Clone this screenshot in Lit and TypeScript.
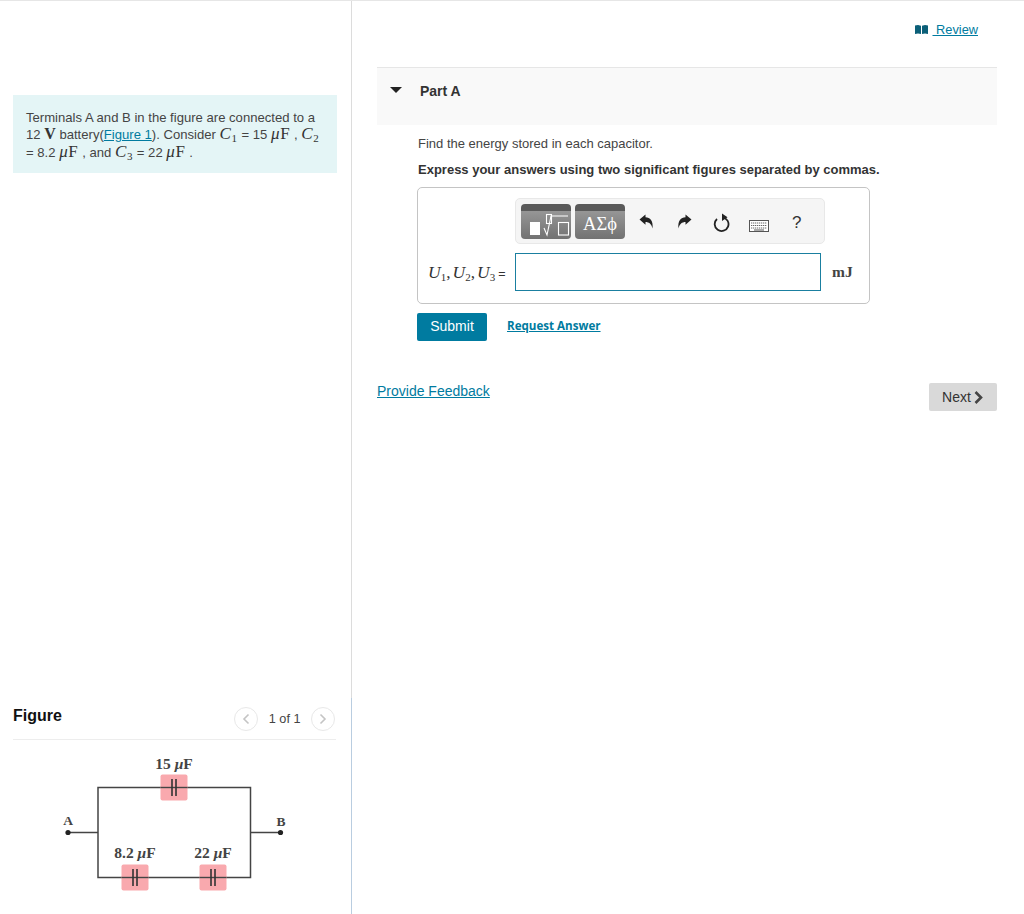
import { LitElement, html, css, svg } from "lit";
import { customElement } from "lit/decorators.js";

@customElement("app-root")
export class AppRoot extends LitElement {
  static styles = css`
    :host { display: block; width: 1024px; height: 914px; font-family: "Liberation Sans", Arial, sans-serif; color: #333; overflow: hidden; background: #fff; }
    .page { display: flex; height: 914px; box-sizing: border-box; border-top: 1px solid #e6e6e6; }
    .left { width: 352px; flex: none; box-sizing: border-box; border-right: 1px solid #dcdcdc; padding: 94px 14px 0 13px; position: relative; display: flex; flex-direction: column; }
    .left::after { content: ""; position: absolute; right: -1px; top: 697px; bottom: 0; width: 1px; background: #b9cde0; }
    .intro { width: 324px; height: 78px; box-sizing: border-box; background: #e4f5f6; padding: 15px 0 0 13px; font-size: 13.100px; color: #444; white-space: nowrap; }
    .l { height: 16px; line-height: 16px; }
    .l.last { margin-top: 2px; }
    .m { font-family: "Liberation Serif", serif; font-size: 17px; color: #333; letter-spacing: 0.700px; }
    .m i { font-style: italic; }
    .mb { font-family: "Liberation Serif", serif; font-weight: 700; font-size: 16px; color: #333; }
    .m sub { font-size: 11px; line-height: 0; vertical-align: -3px; }
    a { color: #007ba0; text-decoration: underline; }
    .fighead { margin-top: 525px; display: flex; align-items: center; height: 42px; border-bottom: 1px solid #ededed; width: 323px; box-sizing: border-box; padding-bottom: 2px; }
    .fighead h2 { margin: 0 0 3px; font-size: 16px; font-weight: 700; color: #111; flex: 1; }
    .pager { display: flex; align-items: center; gap: 10.500px; font-size: 12.700px; color: #444; margin: 3px 1px 0 0; }
    .round { width: 24px; height: 24px; box-sizing: border-box; border: 1px solid #e8e8e8; border-radius: 50%; display: flex; align-items: center; justify-content: center; }
    .figure { display: block; }
    .figure text { font-family: "Liberation Serif", serif; font-weight: 700; fill: #444; }
    .right { flex: 1; box-sizing: border-box; padding: 0 27px 0 25px; display: flex; flex-direction: column; }
    .review { display: flex; justify-content: flex-end; align-items: flex-start; height: 66px; padding: 21px 19px 0 0; box-sizing: border-box; font-size: 12.800px; }
    .review svg { margin: 3px 4px 0 0; }
    .parthead { height: 58px; background: #f9f9f9; border-top: 1px solid #e6e6e6; box-sizing: border-box; padding: 15px 0 0 13px; display: flex; gap: 18px; font-size: 14px; font-weight: 700; color: #333; line-height: 17px; align-items: flex-start; }
    .tri { margin-top: 4px; }
    .body { padding-left: 40px; }
    .find { margin: 11px 0 0 1px; font-size: 13px; line-height: 16px; color: #444; }
    .express { margin: 10px 0 0 1px; font-size: 13px; line-height: 16px; font-weight: 700; color: #333; }
    .answer { margin-top: 9px; width: 453px; height: 117px; box-sizing: border-box; border: 1px solid #c4c4c4; border-radius: 5px; padding: 10px 0 0 10px; }
    .toolbar { margin-left: 87px; width: 310px; height: 46px; box-sizing: border-box; background: #f5f5f5; border: 1px solid #e8e8e8; border-radius: 5px; display: flex; align-items: center; padding-left: 5px; }
    .tb { width: 50px; height: 35px; box-sizing: border-box; border-radius: 4px; border-top: 7px solid #5a5a5a; background: linear-gradient(#969696, #727272); display: flex; align-items: center; justify-content: center; color: #fff; margin-right: 4px; }
    .tb svg { display: block; }
    .tb.two { font-family: "Liberation Serif", serif; font-size: 18.500px; }
    .tools { display: flex; margin: 1px 0 0 -1px; }
    .ico { width: 37.500px; height: 22px; box-sizing: border-box; display: flex; justify-content: center; align-items: center; }
    .ico.low { padding-top: 9px; }
    .ico.re { padding-top: 2px; }
    .ico.q { font-size: 17px; color: #333; padding-top: 3px; }
    .inputrow { display: flex; align-items: center; margin-top: 9px; }
    .label { width: 87px; font-family: "Liberation Serif", serif; font-size: 17.500px; color: #333; white-space: nowrap; }
    .label i { font-style: italic; }
    .label sub { font-size: 11px; line-height: 0; vertical-align: -3px; }
    .label .c { margin-right: 2px; }
    .label .eq { font-family: "Liberation Sans", sans-serif; font-size: 12.500px; margin-left: 3px; }
    .box { width: 306px; height: 38px; box-sizing: border-box; border: 1px solid #1a7fa0; background: #fff; }
    .unit { margin-left: 11px; font-family: "Liberation Serif", serif; font-weight: 700; font-size: 15.500px; color: #444; }
    .actions { display: flex; align-items: center; margin-top: 9px; gap: 20px; }
    .submit { width: 70px; height: 28px; box-sizing: border-box; padding-bottom: 2px; background: #007ba0; color: #fff; border-radius: 2px; display: flex; align-items: center; justify-content: center; font-size: 14px; }
    .req { font-family: "Open Sans", "Liberation Sans", sans-serif; font-weight: 700; font-size: 11.600px; margin-top: -3px; }
    .bottom { display: flex; justify-content: space-between; margin-top: 28px; align-items: flex-start; }
    .feedback { font-size: 14px; margin-top: 14px; }
    .next { width: 68px; height: 28px; background: #d9d9d9; border-radius: 2px; display: flex; align-items: center; justify-content: center; gap: 3px; font-size: 14px; color: #333; margin-top: 14px; }
  `;

  private cap(x: number, y: number) {
    return svg`<rect x=${x - 13.5} y=${y - 13} width="27" height="26" rx="2" fill="#f9a9ae"/>
      <path d="M${x - 13.5} ${y}H${x + 13.5}" stroke="#444" stroke-width="1.400"/>
      <path d="M${x - 2} ${y - 8.5}V${y + 8.5}M${x + 2} ${y - 8.5}V${y + 8.5}" stroke="#333" stroke-width="1.600"/>`;
  }

  render() {
    return html`<div class="page">
      <div class="left">
        <div class="intro">
          <div class="l">Terminals A and B in the figure are connected to a</div>
          <div class="l">12 <span class="mb">V</span> battery(<a href="#">Figure 1</a>). Consider <span class="m"><i>C</i><sub>1</sub></span> = 15 <span class="m"><i>μ</i>F</span> , <span class="m"><i>C</i><sub>2</sub></span></div>
          <div class="l last">= 8.2 <span class="m"><i>μ</i>F</span> , and <span class="m"><i>C</i><sub>3</sub></span> = 22 <span class="m"><i>μ</i>F</span> .</div>
        </div>
        <div class="fighead">
          <h2>Figure</h2>
          <div class="pager">
            <span class="round"><svg width="8" height="12" viewBox="0 0 8 12"><path d="M6.500 1.500 2 6l4.500 4.500" fill="none" stroke="#c4c4c4" stroke-width="1.600"/></svg></span>
            <span>1 of 1</span>
            <span class="round"><svg width="8" height="12" viewBox="0 0 8 12"><path d="M1.500 1.500 6 6l-4.500 4.500" fill="none" stroke="#c4c4c4" stroke-width="1.600"/></svg></span>
          </div>
        </div>
        <svg class="figure" width="323" height="170" viewBox="13 740 323 170">
          <path d="M98 787.500H250.500V877.500H98Z" fill="none" stroke="#444" stroke-width="1.500"/>
          <path d="M68 832.500H98M250.500 832.500H280" stroke="#444" stroke-width="1.300"/>
          <circle cx="68" cy="832.500" r="2.600" fill="#222"/>
          <circle cx="280.500" cy="832.500" r="2.600" fill="#222"/>
          ${this.cap(174, 787.5)}${this.cap(135, 877.5)}${this.cap(213, 877.5)}
          <text x="68" y="825" font-size="13.500" text-anchor="middle">A</text>
          <text x="281" y="826" font-size="13.500" text-anchor="middle">B</text>
          <text x="174" y="769" font-size="15.500" text-anchor="middle">15 <tspan font-style="italic">μ</tspan>F</text>
          <text x="135" y="858" font-size="15.500" text-anchor="middle">8.2 <tspan font-style="italic">μ</tspan>F</text>
          <text x="213" y="858" font-size="15.500" text-anchor="middle">22 <tspan font-style="italic">μ</tspan>F</text>
        </svg>
      </div>
      <div class="right">
        <div class="review"><svg width="13" height="9" viewBox="0 0 13 9"><path d="M0 0.500 3 0 6 0.800V9L3 8.400 0 9zM7 0.800 10 0 13 0.500V9L10 8.400 7 9z" fill="#0b5f78"/></svg><a href="#">&nbsp;Review</a></div>
        <div class="parthead"><svg class="tri" width="12" height="6" viewBox="0 0 12 6"><path d="M0 0h12L6 6z" fill="#222"/></svg><span>Part A</span></div>
        <div class="body">
          <p class="find">Find the energy stored in each capacitor.</p>
          <p class="express">Express your answers using two significant figures separated by commas.</p>
          <div class="answer">
            <div class="toolbar">
              <div class="tb"><svg width="50" height="28" viewBox="0 0 50 28"><rect x="9" y="11" width="10" height="13" fill="#fff"/><path d="M23 17l3 7 4-19h17" fill="none" stroke="#fff" stroke-width="1.100"/><rect x="25.500" y="3.500" width="5" height="9" fill="none" stroke="#fff" stroke-width="1.100"/><rect x="37.500" y="11.500" width="10" height="12.500" fill="none" stroke="#fff" stroke-width="1.100"/></svg></div>
              <div class="tb two">ΑΣϕ</div>
              <div class="tools">
                <span class="ico"><svg width="15" height="15" viewBox="0 0 15 15"><path d="M0.500 5.500 6.500 0.500V3.300C11 3.300 14.500 6.800 13.500 14.500 12.500 10 10 8 6.500 8V10.800Z" fill="#222"/></svg></span>
                <span class="ico"><svg width="15" height="15" viewBox="0 0 15 15"><path d="M14.500 5.500 8.500 0.500V3.300C4 3.300 0.500 6.800 1.500 14.500 2.500 10 5 8 8.500 8V10.800Z" fill="#222"/></svg></span>
                <span class="ico re"><svg width="18" height="19" viewBox="0 0 18 19"><path d="M9.500 4.300A6.900 6.900 0 1 1 4 6" fill="none" stroke="#222" stroke-width="1.800"/><path d="M9 0.500 14.500 4.200 9 8z" fill="#222"/></svg></span>
                <span class="ico low"><svg width="20" height="12" viewBox="0 0 20 12"><rect x="0.500" y="0.500" width="19" height="11" fill="#fff" stroke="#555"/><path d="M2 3h16M2 5.500h16M2 8h16" stroke="#666" stroke-dasharray="1.300 .7"/><path d="M5 10h10" stroke="#555"/></svg></span>
                <span class="ico q">?</span>
              </div>
            </div>
            <div class="inputrow">
              <span class="label"><i>U</i><sub>1</sub><span class="c">,</span><i>U</i><sub>2</sub><span class="c">,</span><i>U</i><sub>3</sub><span class="eq">=</span></span>
              <div class="box"></div>
              <span class="unit">mJ</span>
            </div>
          </div>
          <div class="actions"><div class="submit">Submit</div><a class="req" href="#">Request Answer</a></div>
        </div>
        <div class="bottom">
          <a class="feedback" href="#">Provide Feedback</a>
          <div class="next">Next<svg width="10" height="13" viewBox="0 0 10 13"><path d="M1.500 1 7 6.500 1.500 12" fill="none" stroke="#444" stroke-width="2.600"/></svg></div>
        </div>
      </div>
    </div>`;
  }
}
